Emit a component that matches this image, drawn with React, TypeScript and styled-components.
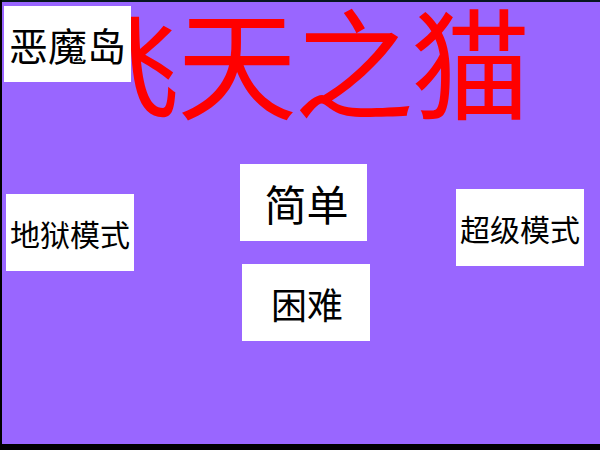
import React from "react";
import styled, { createGlobalStyle } from "styled-components";

const GlobalStyle = createGlobalStyle`
  html, body {
    margin: 0;
    padding: 0;
    background: #000;
    overflow: hidden;
  }
  body {
    font-family: "Noto Sans CJK SC", "Noto Sans", sans-serif;
  }
`;

const Stage = styled.div`
  position: relative;
  width: 600px;
  height: 442px;
  margin-left: 2px;
  border-top: 2px solid #07161f;
  background: #9966ff;
  overflow: hidden;
`;

const Title = styled.h1`
  margin: -3px 0 0;
  height: 127px;
  padding-right: 16px;
  font-size: 120px;
  line-height: 120px;
  font-weight: 400;
  color: #ff0000;
  text-align: center;
  letter-spacing: -3px;
`;

const Button = styled.div<{ $size: number; $w?: number; $h?: number }>`
  display: flex;
  align-items: center;
  justify-content: center;
  width: ${(p) => p.$w ?? 128}px;
  height: ${(p) => p.$h ?? 77}px;
  background: #fff;
  color: #000;
  font-size: ${(p) => p.$size}px;
  line-height: 1;
  white-space: nowrap;
  cursor: pointer;
`;

const IslandButton = styled(Button)`
  position: absolute;
  left: 2px;
  top: 4px;
`;

const Menu = styled.div`
  display: flex;
  align-items: flex-start;
  padding-left: 4px;
`;

const Column = styled.div<{ $top: number; $left: number }>`
  display: flex;
  flex-direction: column;
  gap: 23px;
  margin-top: ${(p) => p.$top}px;
  margin-left: ${(p) => p.$left}px;
`;

const Nudge = styled.span<{ $x: number }>`
  margin-left: ${(p) => p.$x}px;
`;

export default function App() {
  return (
    <>
      <GlobalStyle />
      <Stage>
        <Title>飞天之猫</Title>
        <Menu>
          <Column $top={68} $left={0}>
            <Button $size={30}>地狱模式</Button>
          </Column>
          <Column $top={38} $left={106}>
            <Button $size={42} $w={127}>
              <Nudge $x={6}>简单</Nudge>
            </Button>
            <Button $size={36} style={{ marginLeft: 2 }}>
              <Nudge $x={2}>困难</Nudge>
            </Button>
          </Column>
          <Column $top={63} $left={86}>
            <Button $size={30}>超级模式</Button>
          </Column>
        </Menu>
        <IslandButton $size={39} $w={127} $h={76}>
          恶魔岛
        </IslandButton>
      </Stage>
    </>
  );
}
